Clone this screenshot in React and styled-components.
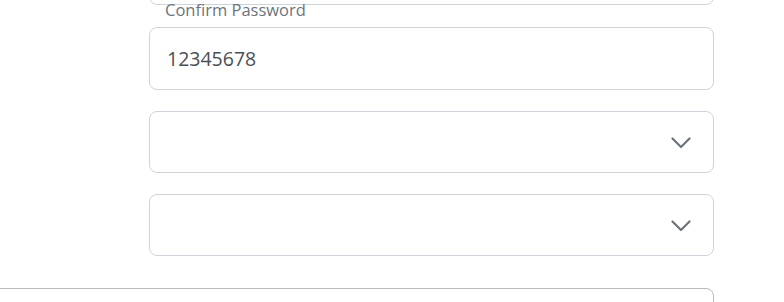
import React from "react";
import styled, { createGlobalStyle } from "styled-components";

const GlobalStyle = createGlobalStyle`
  html, body {
    margin: 0;
    padding: 0;
    background: #ffffff;
    font-family: "Open Sans", "Noto Sans", sans-serif;
    overflow: hidden;
  }
`;

function Chevron() {
  return (
    <svg width="20" height="12" viewBox="0 0 20 12" fill="none">
      <path
        d="M1.5 1.5 L10 10 L18.5 1.5"
        stroke="#6c757d"
        strokeWidth="2.2"
        strokeLinecap="round"
        strokeLinejoin="round"
      />
    </svg>
  );
}

function App() {
  return (
    <>
      <GlobalStyle />
      <Page>
        <Form>
          <Box />
          <Label>Confirm Password</Label>
          <Input defaultValue="12345678" type="text" />
          <SelectBox>
            <Chevron />
          </SelectBox>
          <SelectBox>
            <Chevron />
          </SelectBox>
        </Form>
        <Section />
      </Page>
    </>
  );
}

export default App;

const Page = styled.div`
  width: 784px;
  height: 302px;
  overflow: hidden;
`;

const Form = styled.div`
  display: flex;
  flex-direction: column;
  width: 565px;
  margin-left: 149px;
  margin-top: -57px;
`;

const Box = styled.div`
  box-sizing: border-box;
  height: 62px;
  border: 1px solid #ced4da;
  border-radius: 8px;
`;

const Label = styled.label`
  display: block;
  font-size: 16.5px;
  line-height: 22px;
  color: #6c757d;
  padding-left: 16px;
  margin-top: -6px;
  margin-bottom: 6px;
`;

const Input = styled.input`
  box-sizing: border-box;
  height: 63px;
  width: 100%;
  border: 1px solid #ced4da;
  border-radius: 8px;
  padding: 0 17px;
  font-family: "Open Sans", "Noto Sans", sans-serif;
  font-size: 19.5px;
  color: #495057;
  background: #fff;
  outline: none;
`;

const SelectBox = styled.div`
  box-sizing: border-box;
  height: 62px;
  margin-top: 21px;
  border: 1px solid #ced4da;
  border-radius: 8px;
  display: flex;
  align-items: center;
  justify-content: flex-end;
  padding-right: 22px;
  padding-top: 2px;
`;

const Section = styled.div`
  box-sizing: border-box;
  height: 80px;
  width: 734px;
  margin-left: -20px;
  margin-top: 32px;
  border: 1px solid #b9b9b9;
  border-radius: 8px;
`;
